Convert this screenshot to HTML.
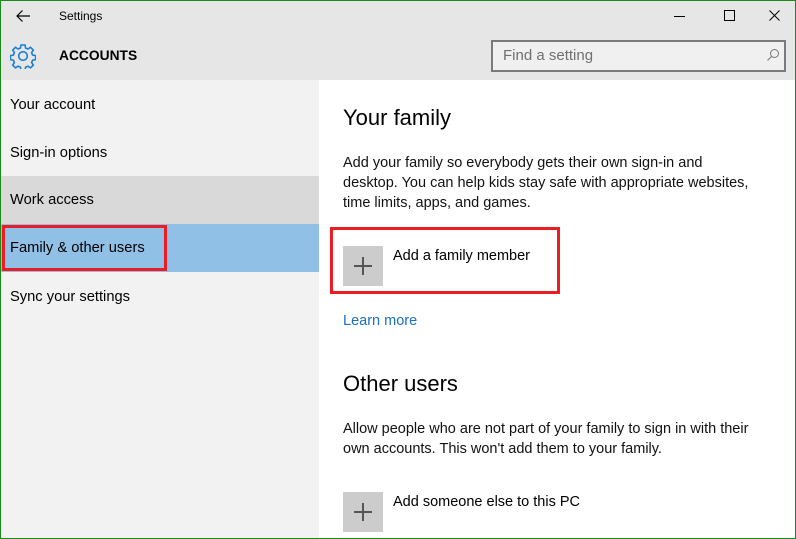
<!DOCTYPE html>
<html><head><meta charset="utf-8"><style>
*{margin:0;padding:0;box-sizing:border-box}
body{width:796px;height:539px;overflow:hidden;font-family:"Segoe UI","Liberation Sans",sans-serif;color:#000;position:relative;background:#fff}
.win{position:absolute;left:0;top:0;width:796px;height:539px;overflow:hidden}
.bd{position:absolute;left:0;top:0;width:796px;height:539px;border:1px solid #1a8a1a}
.hdr{position:absolute;left:0;top:0;width:796px;height:80px;background:#e6e6e6}
.left{position:absolute;left:0;top:80px;width:319px;height:460px;background:#f2f2f2}
.t{position:absolute;white-space:nowrap}
.nav{position:absolute;left:0;width:319px;height:48px;font-size:14.7px;line-height:48px;padding-left:10px}
.plus{position:absolute;width:40px;height:40px;background:#cccccc}
.plus:before{content:"";position:absolute;left:11px;top:19px;width:18px;height:1.5px;background:#555}
.plus:after{content:"";position:absolute;left:19.25px;top:11px;width:1.5px;height:18px;background:#555}
</style></head><body><div class="win">
<div class="hdr"></div>
<svg class="t" style="left:15px;top:9px" width="16" height="14" viewBox="0 0 16 14"><path d="M15 7H2M7.5 1.5L2 7l5.5 5.5" fill="none" stroke="#000" stroke-width="1.2"/></svg>
<div class="t" style="left:59px;top:9px;font-size:12px">Settings</div>
<svg class="t" style="left:674px;top:16px" width="12" height="2"><rect width="11" height="1" fill="#000"/></svg>
<svg class="t" style="left:724px;top:10px" width="12" height="12"><rect x=".5" y=".5" width="10" height="10" fill="none" stroke="#000"/></svg>
<svg class="t" style="left:769px;top:10px" width="12" height="12"><path d="M.5 .5L10.5 10.5M10.5 .5L.5 10.5" stroke="#000"/></svg>
<svg class="t" style="left:10px;top:43px" width="26" height="26" viewBox="0 0 26 26"><g fill="none" stroke="#1a7fd6" stroke-width="1.6"><circle cx="13" cy="13" r="4.3"/><path d="M11 2h4l.6 3 2.3 1 2.6-1.7 2.8 2.8-1.7 2.6 1 2.3 3 .6v4l-3 .6-1 2.3 1.7 2.6-2.8 2.8-2.6-1.7-2.3 1-.6 3h-4l-.6-3-2.3-1-2.6 1.7-2.8-2.8 1.7-2.6-1-2.3-3-.6v-4l3-.6 1-2.3-1.7-2.6 2.8-2.8 2.6 1.7 2.3-1z"/></g></svg>
<div class="t" style="left:59px;top:48px;font-size:13.8px;font-weight:bold">ACCOUNTS</div>
<div class="t" style="left:491px;top:40px;width:295px;height:32px;border:2px solid #7a7a7a;background:#f0f0f0"></div>
<div class="t" style="left:503px;top:47px;font-size:15px;color:#707070">Find a setting</div>
<svg class="t" style="left:766px;top:48px" width="14" height="14" viewBox="0 0 14 14"><circle cx="8.5" cy="5.5" r="4" fill="none" stroke="#777"/><path d="M5.5 8.5L1.5 12.5" stroke="#777"/></svg>
<div class="left"></div>
<div class="nav" style="top:81px">Your account</div>
<div class="nav" style="top:129px">Sign-in options</div>
<div class="nav" style="top:176px;background:#d9d9d9">Work access</div>
<div class="nav" style="top:224px;background:#91c0e6">Family &amp; other users</div>
<div class="t" style="left:2px;top:225px;width:165px;height:46px;border:3px solid #ec1c24"></div>
<div class="nav" style="top:273px">Sync your settings</div>
<div class="t" style="left:343px;top:105px;font-size:22px;font-weight:300">Your family</div>
<div class="t" style="left:343px;top:153px;font-size:14.5px;line-height:20px;color:#111">Add your family so everybody gets their own sign-in and<br>desktop. You can help kids stay safe with appropriate websites,<br>time limits, apps, and games.</div>
<div class="plus" style="left:343px;top:246px"></div>
<div class="t" style="left:393px;top:248px;font-size:14.5px">Add a family member</div>
<div class="t" style="left:330px;top:227px;width:230px;height:67px;border:3px solid #ec1c24"></div>
<div class="t" style="left:343px;top:313px;font-size:14.5px;color:#1a6fc4">Learn more</div>
<div class="t" style="left:343px;top:371px;font-size:22px;font-weight:300">Other users</div>
<div class="t" style="left:343px;top:419px;font-size:14.5px;line-height:20px;color:#111">Allow people who are not part of your family to sign in with their<br>own accounts. This won't add them to your family.</div>
<div class="plus" style="left:343px;top:492px"></div>
<div class="t" style="left:393px;top:494px;font-size:14.5px">Add someone else to this PC</div>
<div class="bd"></div>
</div></body></html>
